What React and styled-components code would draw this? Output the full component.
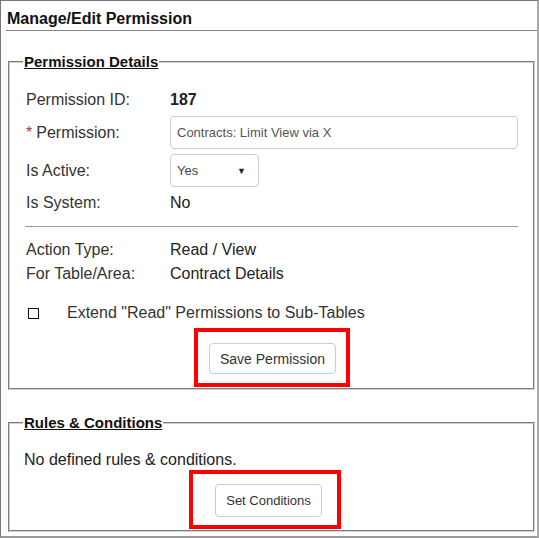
import styled, { createGlobalStyle } from "styled-components";

const GlobalStyle = createGlobalStyle`
  html, body {
    margin: 0;
    padding: 0;
    background: #fff;
  }
  * {
    box-sizing: border-box;
  }
`;

const Page = styled.div`
  width: 539px;
  height: 538px;
  border: 1px solid #777;
  border-right: 2px solid #aaa;
  border-bottom: 2px solid #999;
  font-family: "Liberation Sans", Arial, sans-serif;
  font-size: 16px;
  color: #222;
  overflow: hidden;
`;

const Title = styled.h2`
  margin: 0 0 0 5px;
  padding: 10px 0 4px 1px;
  font-size: 16px;
  font-weight: 700;
  line-height: 15px;
  color: #111;
  border-bottom: 1px solid #888;
`;

const Box = styled.fieldset`
  margin: ${(p) => p.$top}px 2px 0 7px;
  padding: 0 15px ${(p) => p.$bottom}px ${(p) => p.$left}px;
  border: 2px groove #d0d0d0;
  min-width: 0;
`;

const Legend = styled.legend`
  margin-left: ${(p) => p.$shift}px;
  padding: 0 1px;
  font-size: 15px;
  font-weight: 700;
  line-height: 20px;
  color: #111;
  text-decoration: underline;
`;

const Grid = styled.div`
  display: grid;
  grid-template-columns: 144px 1fr;
  row-gap: ${(p) => p.$gap}px;
  align-items: center;
  margin-top: ${(p) => p.$top}px;
`;

const Label = styled.div`
  line-height: 22px;
  color: #333;
`;

const Star = styled.span`
  color: #c0392b;
  margin-right: 4px;
`;

const Value = styled.div`
  line-height: 22px;
  font-weight: ${(p) => (p.$bold ? 700 : 400)};
  color: #222;
`;

const TextInput = styled.input`
  width: 100%;
  height: 33px;
  padding: 0 6px;
  border: 1px solid #ccc;
  border-radius: 4px;
  font-family: inherit;
  font-size: 13px;
  color: #555;
  outline: none;
`;

const Select = styled.div`
  width: 89px;
  height: 33px;
  display: flex;
  align-items: center;
  justify-content: space-between;
  padding: 0 12px 0 6px;
  border: 1px solid #ccc;
  border-radius: 4px;
  font-size: 13px;
  color: #444;
`;

const Arrow = styled.span`
  font-size: 9px;
  color: #222;
`;

const Divider = styled.hr`
  margin: 12px 0 0 -1px;
  border: none;
  border-top: 1px solid #999;
`;

const CheckRow = styled.label`
  display: flex;
  align-items: center;
  margin-top: 17px;
  height: 22px;
  color: #333;
`;

const Check = styled.input`
  appearance: none;
  width: 11px;
  height: 11px;
  margin: 0 28px 0 2px;
  border: 1px solid #111;
  background: #fff;
`;

const Actions = styled.div`
  display: flex;
  justify-content: center;
  margin-top: ${(p) => p.$top}px;
  margin-left: ${(p) => p.$shift}px;
`;

const Highlight = styled.div`
  border: 4px solid #f00;
  padding: ${(p) => p.$pad};
`;

const Button = styled.button`
  height: ${(p) => p.$h}px;
  padding: 0 10px;
  background: #fff;
  border: 1px solid #ccc;
  border-radius: 4px;
  font-family: inherit;
  font-size: ${(p) => p.$size}px;
  color: #333;
  cursor: pointer;
`;

const Note = styled.div`
  margin-top: 17px;
  line-height: 20px;
  color: #222;
`;

const App = () => {
  return (
    <Page>
      <GlobalStyle />
      <Title>Manage/Edit Permission</Title>

      <Box $top={21} $bottom={1} $left={16}>
        <Legend $shift={-3}>Permission Details</Legend>
        <Grid $gap={5} $top={17}>
          <Label>Permission ID:</Label>
          <Value $bold>187</Value>
          <Label>
            <Star>*</Star>Permission:
          </Label>
          <TextInput defaultValue="Contracts: Limit View via X" />
          <Label>Is Active:</Label>
          <Select>
            Yes <Arrow>▼</Arrow>
          </Select>
          <Label>Is System:</Label>
          <Value>No</Value>
        </Grid>
        <Divider />
        <Grid $gap={2} $top={12}>
          <Label>Action Type:</Label>
          <Value>Read / View</Value>
          <Label>For Table/Area:</Label>
          <Value>Contract Details</Value>
        </Grid>
        <CheckRow>
          <Check type="checkbox" />
          Extend "Read" Permissions to Sub-Tables
        </CheckRow>
        <Actions $top={4} $shift={0}>
          <Highlight $pad="11px 10px 9px 11px">
            <Button $h={31} $size={14}>Save Permission</Button>
          </Highlight>
        </Actions>
      </Box>

      <Box $top={23} $bottom={1} $left={14}>
        <Legend $shift={-1}>Rules &amp; Conditions</Legend>
        <Note>No defined rules &amp; conditions.</Note>
        <Actions $top={0} $shift={-12}>
          <Highlight $pad="10px 15px 8px 22px">
            <Button $h={33} $size={13}>Set Conditions</Button>
          </Highlight>
        </Actions>
      </Box>
    </Page>
  );
};

export default App;
